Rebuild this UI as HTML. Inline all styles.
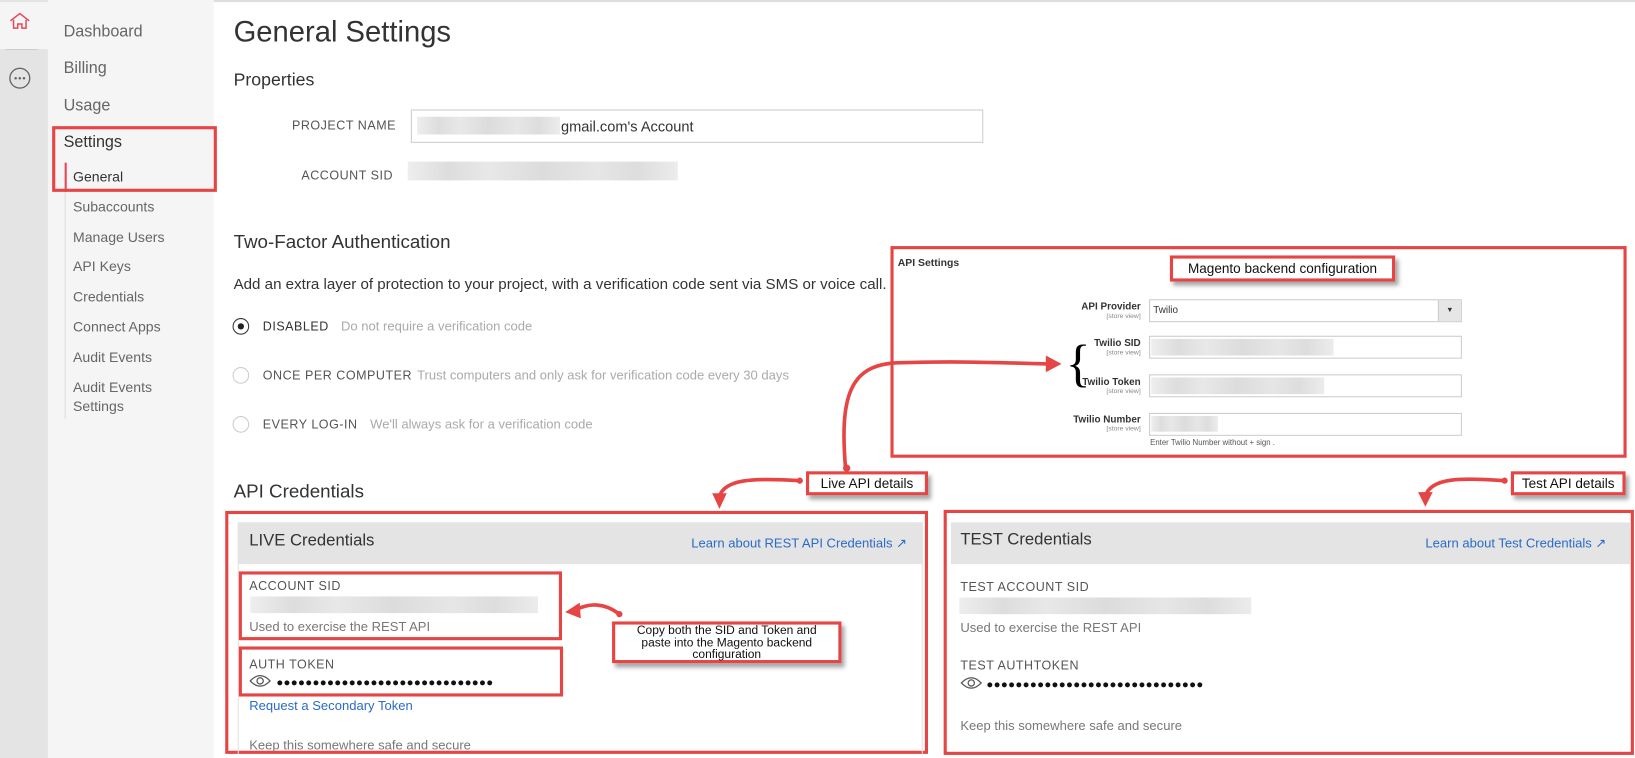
<!DOCTYPE html>
<html><head><meta charset="utf-8"><style>
*{margin:0;padding:0;box-sizing:border-box}
body{width:1635px;height:758px;overflow:hidden;background:#fff;font-family:"Liberation Sans",sans-serif;color:#333;position:relative}
#w{position:absolute;left:0;top:0;width:1568px;height:727px;transform:scale(1.0427);transform-origin:0 0}
.a{position:absolute;white-space:nowrap}
.rb{position:absolute;border:3px solid #e64545}
.blur{position:absolute;background:linear-gradient(90deg,#eee,#ddd 15%,#e8e8e8 30%,#dcdcdc 50%,#e6e6e6 70%,#ddd 85%,#ececec)}
.call{position:absolute;border:3px solid #e64545;background:#fff;box-shadow:3px 4px 4px rgba(0,0,0,.35);font-size:13px;color:#111;text-align:center}
.side{font-size:13.5px;color:#666}
.lbl{font-size:12px;color:#555;letter-spacing:.5px}
.rad{position:absolute;width:16px;height:16px;border:1.5px solid #ccc;border-radius:50%}
.mg{font-size:9.5px;color:#333;font-weight:bold;text-align:right}
.mg span{display:block;font-size:6.5px;color:#888;font-weight:normal}
.inp{position:absolute;border:1px solid #ccc;background:#fff}
.dots{font-size:11px;letter-spacing:0.3px;color:#111}
</style></head><body><div id="w">
<div class="a" style="left:0;top:0;width:1568px;height:2px;background:#ddd"></div>
<div class="a" style="left:0;top:0;width:46px;height:727px;background:#e4e4e4"></div>
<div class="a" style="left:0;top:2px;width:46px;height:45px;background:#f5f5f5"></div>
<div class="a" style="left:5px;top:47px;width:31px;height:1px;background:#ccc"></div>
<svg class="a" style="left:8px;top:10px" width="22" height="20" viewBox="0 0 22 20"><path d="M2 10 L11 3 L20 10 M5 9 V17 H9 V13 H13 V17 H17 V9" fill="none" stroke="#e8465a" stroke-width="1.4"/></svg>
<svg class="a" style="left:8px;top:64px" width="22" height="22"><circle cx="11" cy="11" r="9.5" fill="none" stroke="#666" stroke-width="1.3"/><circle cx="7" cy="11" r="1.2" fill="#666"/><circle cx="11" cy="11" r="1.2" fill="#666"/><circle cx="15" cy="11" r="1.2" fill="#666"/></svg>
<div class="a" style="left:46px;top:0;width:159px;height:727px;background:#f5f5f5"></div>
<div class="a" style="left:61px;top:22px;font-size:15.5px;color:#666">Dashboard</div>
<div class="a" style="left:61px;top:57px;font-size:15.5px;color:#666">Billing</div>
<div class="a" style="left:61px;top:93px;font-size:15.5px;color:#666">Usage</div>
<div class="a" style="left:61px;top:128px;font-size:15.5px;color:#333">Settings</div>
<div class="a" style="left:62px;top:156px;width:1px;height:246px;background:#ddd"></div>
<div class="a" style="left:62px;top:156px;width:2px;height:28px;background:#e8465a"></div>
<div class="a side" style="left:70px;top:162px;color:#333">General</div>
<div class="a side" style="left:70px;top:191px">Subaccounts</div>
<div class="a side" style="left:70px;top:220px">Manage Users</div>
<div class="a side" style="left:70px;top:248px">API Keys</div>
<div class="a side" style="left:70px;top:277px">Credentials</div>
<div class="a side" style="left:70px;top:306px">Connect Apps</div>
<div class="a side" style="left:70px;top:335px">Audit Events</div>
<div class="a side" style="left:70px;top:363px;line-height:18px">Audit Events<br>Settings</div>
<div class="rb" style="left:50px;top:121px;width:158px;height:63px"></div>

<div class="a" style="left:224px;top:15px;font-size:28px;color:#333">General Settings</div>
<div class="a" style="left:224px;top:67px;font-size:17px;color:#333">Properties</div>
<div class="a lbl" style="left:280px;top:113px">PROJECT NAME</div>
<div class="inp" style="left:394px;top:105px;width:549px;height:32px"></div>
<div class="blur" style="left:400px;top:112px;width:137px;height:17px"></div>
<div class="a" style="left:538px;top:113px;font-size:14px;color:#333">gmail.com's Account</div>
<div class="a lbl" style="left:289px;top:161px">ACCOUNT SID</div>
<div class="blur" style="left:391px;top:155px;width:259px;height:18px"></div>
<div class="a" style="left:224px;top:222px;font-size:18px;color:#333">Two-Factor Authentication</div>
<div class="a" style="left:224px;top:265px;font-size:14.5px;color:#333">Add an extra layer of protection to your project, with a verification code sent via SMS or voice call.</div>
<div class="rad" style="left:223px;top:305px;border-color:#333"><div style="position:absolute;left:3.5px;top:3.5px;width:6px;height:6px;border-radius:50%;background:#222"></div></div>
<div class="a lbl" style="left:252px;top:306px;color:#333">DISABLED</div><div class="a" style="left:327px;top:306px;font-size:12.5px;color:#aaa">Do not require a verification code</div>
<div class="rad" style="left:223px;top:352px"></div>
<div class="a lbl" style="left:252px;top:353px">ONCE PER COMPUTER</div><div class="a" style="left:400px;top:353px;font-size:12.5px;color:#aaa">Trust computers and only ask for verification code every 30 days</div>
<div class="rad" style="left:223px;top:399px"></div>
<div class="a lbl" style="left:252px;top:400px">EVERY LOG-IN</div><div class="a" style="left:355px;top:400px;font-size:12.5px;color:#aaa">We'll always ask for a verification code</div>
<div class="a" style="left:224px;top:461px;font-size:18px;color:#333">API Credentials</div>

<div class="rb" style="left:854px;top:236px;width:706px;height:203px;background:#fff"></div>
<div class="a" style="left:861px;top:247px;font-size:10px;font-weight:bold;color:#333">API Settings</div>
<div class="call" style="left:1122px;top:245px;width:216px;height:25px;line-height:19px">Magento backend configuration</div>
<div class="a mg" style="left:1000px;top:289px;width:94px">API Provider<span>[store view]</span></div>
<div class="inp" style="left:1102px;top:287px;width:300px;height:22px"><span style="position:absolute;left:3px;top:4px;font-size:9.5px;color:#333">Twilio</span><div style="position:absolute;right:0;top:0;width:22px;height:20px;background:#e6e6e6;border-left:1px solid #ccc;font-size:7px;text-align:center;line-height:20px">▼</div></div>
<div class="a mg" style="left:1000px;top:324px;width:94px">Twilio SID<span>[store view]</span></div>
<div class="inp" style="left:1102px;top:322px;width:300px;height:22px"></div><div class="blur" style="left:1104px;top:325px;width:175px;height:16px"></div>
<div class="a mg" style="left:1000px;top:361px;width:94px">Twilio Token<span>[store view]</span></div>
<div class="inp" style="left:1102px;top:359px;width:300px;height:22px"></div><div class="blur" style="left:1104px;top:362px;width:166px;height:16px"></div>
<div class="a mg" style="left:1000px;top:397px;width:94px">Twilio Number<span>[store view]</span></div>
<div class="inp" style="left:1102px;top:396px;width:300px;height:22px"></div><div class="blur" style="left:1104px;top:399px;width:64px;height:15px"></div>
<div class="a" style="left:1103px;top:420px;font-size:7.5px;color:#555">Enter Twilio Number without + sign .</div>
<div class="a" style="left:1022px;top:318px;font-size:50px;line-height:60px;color:#000;font-family:'Liberation Serif',serif">{</div>

<div class="rb" style="left:216px;top:490px;width:674px;height:233px"></div>
<div class="a" style="left:228px;top:501px;width:657px;height:222px;border:1px solid #e2e2e2;border-bottom:none"></div>
<div class="a" style="left:228px;top:501px;width:657px;height:40px;background:#e4e4e4"></div>
<div class="a" style="left:239px;top:510px;font-size:16px;color:#333">LIVE Credentials</div>
<div class="a" style="left:663px;top:513px;font-size:12.5px;color:#2a6bc8">Learn about REST API Credentials ↗</div>
<div class="rb" style="left:229px;top:548px;width:310px;height:66px"></div>
<div class="a lbl" style="left:239px;top:555px">ACCOUNT SID</div>
<div class="blur" style="left:240px;top:572px;width:276px;height:16px"></div>
<div class="a" style="left:239px;top:594px;font-size:12.5px;color:#777">Used to exercise the REST API</div>
<div class="rb" style="left:229px;top:620px;width:311px;height:48px"></div>
<div class="a lbl" style="left:239px;top:630px">AUTH TOKEN</div>
<svg class="a" style="left:239px;top:646px" width="21" height="14"><path d="M1 7 Q10.5 -3 20 7 Q10.5 17 1 7Z" fill="none" stroke="#555" stroke-width="1.2"/><circle cx="10.5" cy="7" r="3" fill="none" stroke="#555" stroke-width="1.2"/></svg>
<div class="a dots" style="left:265px;top:649px">●●●●●●●●●●●●●●●●●●●●●●●●●●●●●●</div>
<div class="a" style="left:239px;top:670px;font-size:12.5px;color:#2a6bc8">Request a Secondary Token</div>
<div class="a" style="left:239px;top:708px;font-size:12.5px;color:#777">Keep this somewhere safe and secure</div>
<div class="call" style="left:587px;top:596px;width:220px;height:40px;line-height:11.5px;font-size:11.5px;white-space:normal;padding:1px 8px 0">Copy both the SID and Token and paste into the Magento backend configuration</div>
<div class="call" style="left:773px;top:452px;width:117px;height:23px;line-height:17px">Live API details</div>

<div class="rb" style="left:905px;top:489px;width:662px;height:235px"></div>
<div class="a" style="left:912px;top:501px;width:652px;height:40px;background:#e4e4e4"></div>
<div class="a" style="left:921px;top:509px;font-size:16px;color:#333">TEST Credentials</div>
<div class="a" style="left:1367px;top:513px;font-size:12.5px;color:#2a6bc8">Learn about Test Credentials ↗</div>
<div class="a lbl" style="left:921px;top:556px">TEST ACCOUNT SID</div>
<div class="blur" style="left:920px;top:573px;width:280px;height:16px"></div>
<div class="a" style="left:921px;top:595px;font-size:12.5px;color:#777">Used to exercise the REST API</div>
<div class="a lbl" style="left:921px;top:631px">TEST AUTHTOKEN</div>
<svg class="a" style="left:921px;top:648px" width="21" height="14"><path d="M1 7 Q10.5 -3 20 7 Q10.5 17 1 7Z" fill="none" stroke="#555" stroke-width="1.2"/><circle cx="10.5" cy="7" r="3" fill="none" stroke="#555" stroke-width="1.2"/></svg>
<div class="a dots" style="left:946px;top:651px">●●●●●●●●●●●●●●●●●●●●●●●●●●●●●●</div>
<div class="a" style="left:921px;top:689px;font-size:12.5px;color:#777">Keep this somewhere safe and secure</div>
<div class="call" style="left:1449px;top:452px;width:110px;height:23px;line-height:17px">Test API details</div>

<svg class="a" style="left:0;top:0" width="1568" height="727">
<g fill="none" stroke="#e64545" stroke-width="3.5" stroke-linecap="round">
<path d="M811 450 C805 380 815 350 860 348 C920 346 960 348 1005 349"/>
<path d="M767 461 C720 458 695 460 690 476"/>
<path d="M1443 461 C1400 458 1372 458 1367 476"/>
<path d="M594 589 C580 578 565 578 552 585"/>
</g>
<g fill="#e64545">
<polygon points="1003,341 1018,349 1003,357"/>
<polygon points="683,473 697,473 690,488"/>
<polygon points="1360,472 1374,472 1367,486"/>
<polygon points="556,578 542,587 557,593"/>
<circle cx="812" cy="449" r="3.5"/><circle cx="767" cy="461" r="3"/><circle cx="1443" cy="461" r="3"/><circle cx="594" cy="589" r="3"/>
</g></svg>
</div></body></html>
